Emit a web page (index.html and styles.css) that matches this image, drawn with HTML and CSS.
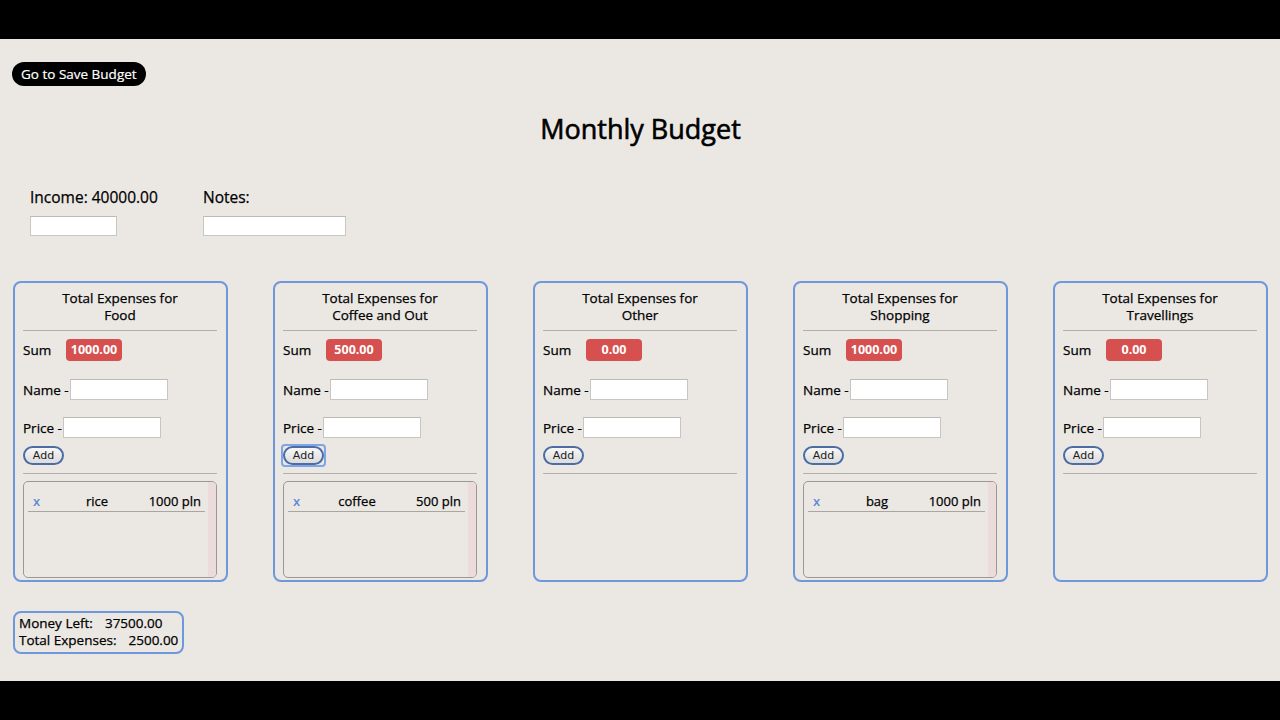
FILE: index.html
```html
<!DOCTYPE html>
<html>
<head>
<meta charset="utf-8">
<link rel="stylesheet" href="styles.css">
</head>
<body>
<div class="frame">
  <div class="letterbox"></div>
  <main class="page">
    <div class="top">
      <button class="nav-btn">Go to Save Budget</button>
    </div>
    <h1 class="title">Monthly Budget</h1>
    <div class="info">
      <div class="field income">
        <div class="field-label">Income: 40000.00</div>
        <input class="text-input income-input" type="text">
      </div>
      <div class="field notes">
        <div class="field-label">Notes:</div>
        <input class="text-input notes-input" type="text">
      </div>
    </div>

    <div class="cards">
      <section class="card">
        <div class="card-title">Total Expenses for<br>Food</div>
        <hr class="rule">
        <div class="sum-row"><span class="sum-label">Sum</span><span class="badge">1000.00</span></div>
        <div class="form-row name-row"><span>Name -</span><input class="text-input item-input" type="text"></div>
        <div class="form-row price-row"><span>Price -</span><input class="text-input item-input" type="text"></div>
        <div class="add-row"><span class="ring"><button class="add-btn">Add</button></span></div>
        <hr class="rule rule-2">
        <div class="list">
          <div class="list-rows">
            <div class="item"><span class="del">x</span><span class="item-name">rice</span><span class="item-price">1000 pln</span></div>
          </div>
          <div class="track"></div>
        </div>
      </section>

      <section class="card">
        <div class="card-title">Total Expenses for<br>Coffee and Out</div>
        <hr class="rule">
        <div class="sum-row"><span class="sum-label">Sum</span><span class="badge">500.00</span></div>
        <div class="form-row name-row"><span>Name -</span><input class="text-input item-input" type="text"></div>
        <div class="form-row price-row"><span>Price -</span><input class="text-input item-input" type="text"></div>
        <div class="add-row"><span class="ring focused"><button class="add-btn">Add</button></span></div>
        <hr class="rule rule-2">
        <div class="list">
          <div class="list-rows">
            <div class="item"><span class="del">x</span><span class="item-name">coffee</span><span class="item-price">500 pln</span></div>
          </div>
          <div class="track"></div>
        </div>
      </section>

      <section class="card">
        <div class="card-title">Total Expenses for<br>Other</div>
        <hr class="rule">
        <div class="sum-row"><span class="sum-label">Sum</span><span class="badge">0.00</span></div>
        <div class="form-row name-row"><span>Name -</span><input class="text-input item-input" type="text"></div>
        <div class="form-row price-row"><span>Price -</span><input class="text-input item-input" type="text"></div>
        <div class="add-row"><span class="ring"><button class="add-btn">Add</button></span></div>
        <hr class="rule rule-2">
      </section>

      <section class="card">
        <div class="card-title">Total Expenses for<br>Shopping</div>
        <hr class="rule">
        <div class="sum-row"><span class="sum-label">Sum</span><span class="badge">1000.00</span></div>
        <div class="form-row name-row"><span>Name -</span><input class="text-input item-input" type="text"></div>
        <div class="form-row price-row"><span>Price -</span><input class="text-input item-input" type="text"></div>
        <div class="add-row"><span class="ring"><button class="add-btn">Add</button></span></div>
        <hr class="rule rule-2">
        <div class="list">
          <div class="list-rows">
            <div class="item"><span class="del">x</span><span class="item-name">bag</span><span class="item-price">1000 pln</span></div>
          </div>
          <div class="track"></div>
        </div>
      </section>

      <section class="card">
        <div class="card-title">Total Expenses for<br>Travellings</div>
        <hr class="rule">
        <div class="sum-row"><span class="sum-label">Sum</span><span class="badge">0.00</span></div>
        <div class="form-row name-row"><span>Name -</span><input class="text-input item-input" type="text"></div>
        <div class="form-row price-row"><span>Price -</span><input class="text-input item-input" type="text"></div>
        <div class="add-row"><span class="ring"><button class="add-btn">Add</button></span></div>
        <hr class="rule rule-2">
      </section>
    </div>

    <div class="summary">
      <div>Money Left:<span class="sum-val">37500.00</span></div>
      <div>Total Expenses:<span class="sum-val">2500.00</span></div>
    </div>
  </main>
  <div class="letterbox"></div>
</div>
</body>
</html>
```

FILE: styles.css
```css
* { box-sizing: border-box; }

html, body {
  margin: 0;
  padding: 0;
  background: #000;
}

body {
  font-family: "Open Sans", "Noto Sans", sans-serif;
  color: #000;
  -webkit-text-stroke: 0.25px currentColor;
}

.frame {
  width: 1280px;
  height: 720px;
  display: flex;
  flex-direction: column;
}

.letterbox {
  height: 39px;
  background: #000;
  flex: none;
}

.page {
  flex: 1;
  background: #ebe8e4;
  padding: 23px 12px 0 13px;
  overflow: hidden;
}

.top { height: 24px; }

.nav-btn {
  height: 24px;
  padding: 0 9px;
  margin-left: -1px;
  border: none;
  border-radius: 12px;
  background: #000;
  color: #fff;
  font-family: inherit;
  font-size: 13.5px;
  line-height: 24px;
  -webkit-text-stroke: 0.2px #fff;
}

.title {
  margin: 0;
  padding-top: 26px;
  height: 86px;
  text-align: center;
  font-size: 27px;
  font-weight: 400;
  line-height: 34px;
  color: #000;
  -webkit-text-stroke: 0.6px #000;
}

.info {
  display: flex;
  padding-left: 17px;
  height: 109px;
  padding-top: 15px;
}

.field { display: flex; flex-direction: column; gap: 9px; }
.income { width: 173px; }

.field-label {
  font-size: 15.5px;
  line-height: 20px;
}

.text-input {
  display: block;
  background: #fff;
  border: 1px solid #c9c6c2;
  border-top-color: #bdbab6;
  padding: 0;
  margin: 0;
  height: 20px;
  font-family: inherit;
}

.income-input { width: 87px; }
.notes-input { width: 143px; }

.cards {
  display: flex;
  gap: 45px;
}

.card {
  width: 215px;
  height: 301px;
  border: 2px solid #6e97dc;
  border-radius: 8px;
  padding: 7px 9px 0 8px;
  font-size: 13.5px;
}

.card-title {
  text-align: center;
  line-height: 17px;
}

.rule {
  border: none;
  border-top: 1px solid #b3b0ac;
  margin: 6px 0 0 0;
  height: 0;
}

.sum-row {
  display: flex;
  align-items: center;
  margin-top: 8px;
  height: 22px;
}

.sum-label { width: 43px; }

.badge {
  width: 56px;
  height: 22px;
  line-height: 22px;
  border-radius: 4px;
  background: #d5504e;
  color: #fff;
  font-weight: 700;
  text-align: center;
  font-size: 12.5px;
  -webkit-text-stroke: 0;
}

.form-row {
  display: flex;
  align-items: center;
  gap: 1px;
  height: 21px;
}

.name-row { margin-top: 18px; }
.price-row { margin-top: 17px; }

.item-input { width: 98px; height: 21px; }

.add-row { margin-top: 8px; height: 19px; display: flex; }

.ring {
  display: block;
  height: 19px;
  border-radius: 2px;
}

.ring.focused {
  outline: 2px solid #7ea6e6;
  outline-offset: 0;
}

.add-btn {
  display: block;
  width: 41px;
  height: 19px;
  padding: 0;
  border: 2px solid #4c6da3;
  border-radius: 10px;
  background: linear-gradient(#f7f7f7, #dcdcdc);
  font-family: "DejaVu Sans", sans-serif;
  font-size: 11px;
  line-height: 15px;
  color: #222;
  -webkit-text-stroke: 0;
}

.rule-2 { margin-top: 8px; }

.list {
  margin-top: 7px;
  height: 97px;
  border: 1px solid #9a9894;
  border-radius: 5px;
  display: flex;
  overflow: hidden;
}

.list-rows {
  flex: 1;
  padding: 0 3px 0 4px;
}

.track {
  width: 8px;
  background: #ecdbdb;
  flex: none;
}

.item {
  display: grid;
  grid-template-columns: 30px 78px 1fr;
  align-items: center;
  padding-top: 9px;
  height: 30px;
  border-bottom: 1px solid #a9a6a2;
  font-size: 13px;
}

.del {
  padding-left: 5px;
  color: #5e8bd8;
  font-weight: 600;
  -webkit-text-stroke: 0;
}

.item-name { text-align: center; }
.item-price { text-align: right; padding-right: 4px; }

.summary {
  display: inline-block;
  margin-top: 29px;
  border: 2px solid #6e97dc;
  border-radius: 8px;
  padding: 2px 4px 3px 4px;
  font-size: 13.5px;
  line-height: 17px;
}

.sum-val { margin-left: 12px; }
```
